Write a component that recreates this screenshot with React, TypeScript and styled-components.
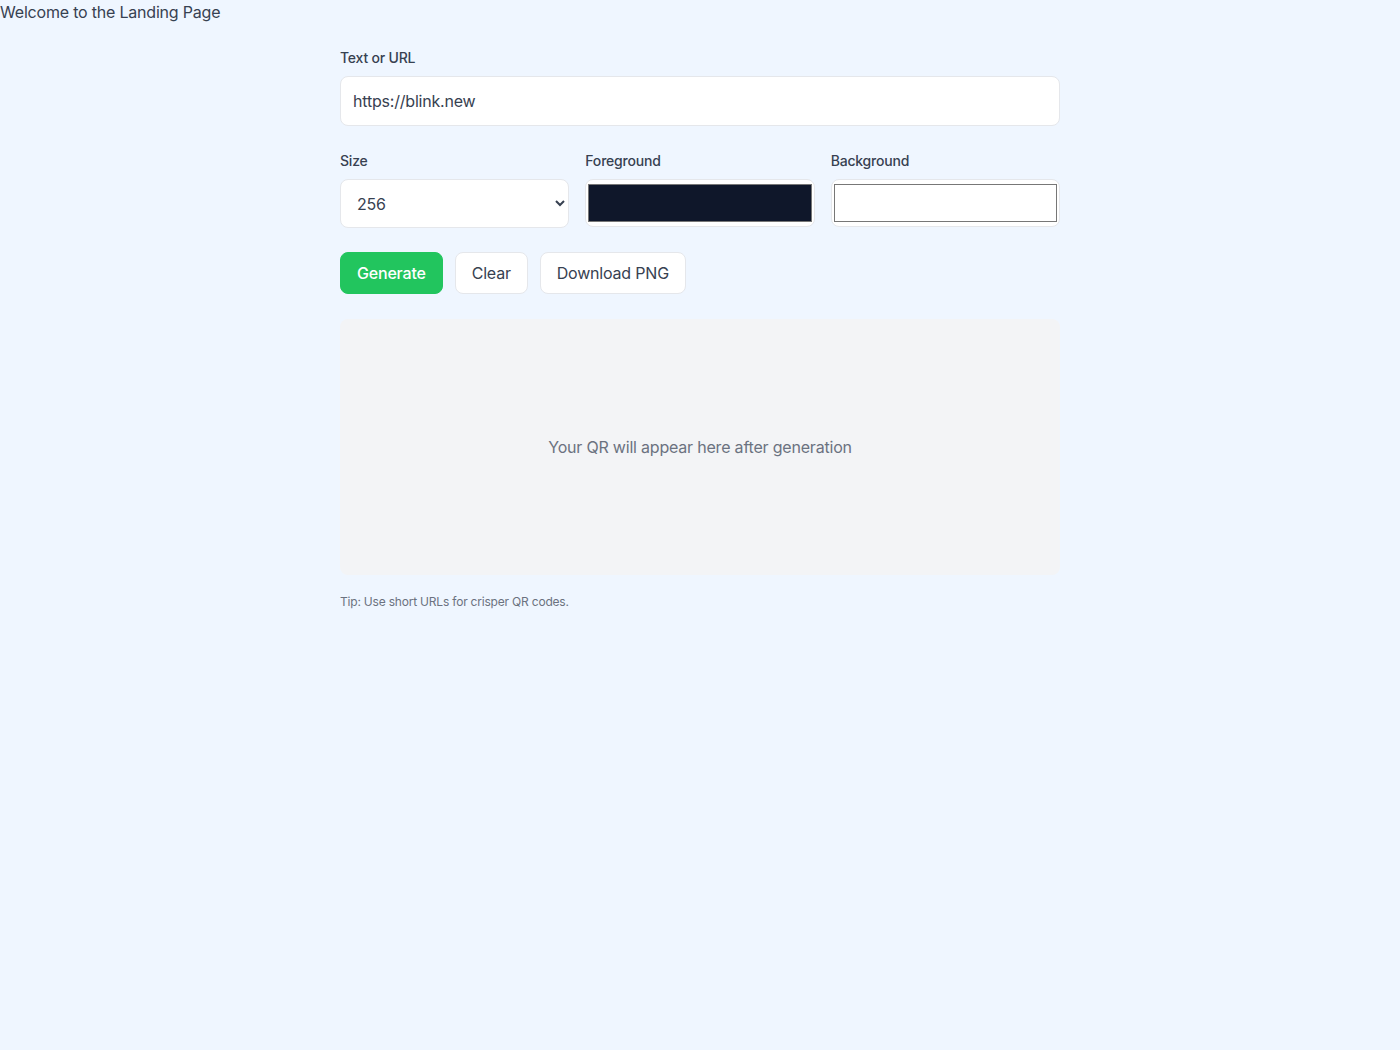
import React, { useState } from "react";
import styled, { createGlobalStyle } from "styled-components";

const Global = createGlobalStyle`
  html, body {
    margin: 0;
    padding: 0;
    background: #eff6ff;
  }
  body {
    font-family: Inter, "Noto Sans", sans-serif;
    letter-spacing: -0.2px;
    color: #374151;
    min-height: 1050px;
  }
  * { box-sizing: border-box; }
`;

const Page = styled.div`
  min-height: 1050px;
  background: #eff6ff;
`;

const Title = styled.div`
  font-size: 16px;
  line-height: 24px;
  color: #374151;
`;

const Main = styled.main`
  width: 720px;
  margin: 0 auto;
  padding-top: 24px;
  display: flex;
  flex-direction: column;
`;

const Field = styled.div`
  display: flex;
  flex-direction: column;
  gap: 8px;
`;

const Label = styled.label`
  font-size: 14px;
  line-height: 20px;
  color: #374151;
  font-weight: 450;
`;

const TextInput = styled.input`
  height: 50px;
  border: 1px solid #e5e7eb;
  border-radius: 8px;
  background: #fff;
  padding: 0 12px;
  font: inherit;
  font-size: 16px;
  letter-spacing: -0.2px;
  color: #374151;
  outline: none;
`;

const Grid = styled.div`
  margin-top: 25px;
  display: grid;
  grid-template-columns: repeat(3, 1fr);
  gap: 16px;
`;

const Select = styled.select`
  height: 49px;
  border: 1px solid #e5e7eb;
  border-radius: 8px;
  background: #fff;
  padding: 0 8px 0 12px;
  font: inherit;
  font-size: 16px;
  letter-spacing: -0.2px;
  color: #374151;
  outline: none;
`;

const ColorInput = styled.input`
  height: 48px;
  width: 100%;
  border: 1px solid #e5e7eb;
  border-radius: 8px;
  background: #fff;
  padding: 0;
  cursor: pointer;
`;

const Actions = styled.div`
  margin-top: 24px;
  display: flex;
  gap: 12px;
`;

const Button = styled.button<{ $primary?: boolean }>`
  height: 42px;
  padding: 0 16px;
  border-radius: 8px;
  font: inherit;
  font-size: 16px;
  letter-spacing: -0.2px;
  font-weight: ${(p) => (p.$primary ? 500 : 400)};
  border: 1px solid ${(p) => (p.$primary ? "#22c55e" : "#e5e7eb")};
  background: ${(p) => (p.$primary ? "#22c55e" : "#fff")};
  color: ${(p) => (p.$primary ? "#fff" : "#374151")};
  cursor: pointer;
`;

const Preview = styled.div`
  margin-top: 25px;
  height: 256px;
  border-radius: 8px;
  background: #f3f4f6;
  display: flex;
  align-items: center;
  justify-content: center;
  font-size: 16px;
  color: #6b7280;
`;

const Tip = styled.p`
  margin: 19px 0 0;
  font-size: 12px;
  line-height: 16px;
  color: #6b7280;
`;

export default function App() {
  const [text, setText] = useState("https://blink.new");
  const [size, setSize] = useState("256");
  const [fg, setFg] = useState("#0f172a");
  const [bg, setBg] = useState("#ffffff");
  return (
    <Page>
      <Global />
      <Title>Welcome to the Landing Page</Title>
      <Main>
        <Field>
          <Label>Text or URL</Label>
          <TextInput value={text} onChange={(e) => setText(e.target.value)} />
        </Field>
        <Grid>
          <Field>
            <Label>Size</Label>
            <Select value={size} onChange={(e) => setSize(e.target.value)}>
              <option value="128">128</option>
              <option value="256">256</option>
              <option value="512">512</option>
            </Select>
          </Field>
          <Field>
            <Label>Foreground</Label>
            <ColorInput type="color" value={fg} onChange={(e) => setFg(e.target.value)} />
          </Field>
          <Field>
            <Label>Background</Label>
            <ColorInput type="color" value={bg} onChange={(e) => setBg(e.target.value)} />
          </Field>
        </Grid>
        <Actions>
          <Button $primary>Generate</Button>
          <Button>Clear</Button>
          <Button>Download PNG</Button>
        </Actions>
        <Preview>Your QR will appear here after generation</Preview>
        <Tip>Tip: Use short URLs for crisper QR codes.</Tip>
      </Main>
    </Page>
  );
}
